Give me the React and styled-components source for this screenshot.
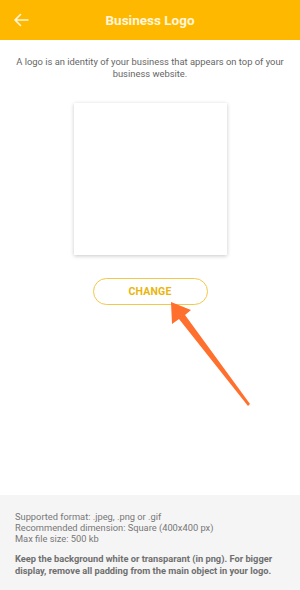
import React from "react";
import styled, { createGlobalStyle } from "styled-components";

const Global = createGlobalStyle`
  html, body { margin: 0; padding: 0; background: #fff; }
  body { font-family: Roboto, "Noto Sans", sans-serif; }
  * { box-sizing: border-box; }
`;

const Page = styled.div`
  position: relative;
  width: 300px;
  height: 590px;
  display: flex;
  flex-direction: column;
  overflow: hidden;
`;

const Header = styled.header`
  height: 40px;
  background: #ffb800;
  display: flex;
  align-items: center;
  justify-content: center;
  position: relative;
  flex-shrink: 0;
`;

const BackButton = styled.button`
  position: absolute;
  left: 12px;
  top: 11px;
  width: 18px;
  height: 18px;
  padding: 0;
  border: none;
  background: none;
  display: flex;
  align-items: center;
  justify-content: center;
`;

const Title = styled.h1`
  margin: 0;
  font-size: 13.5px;
  font-weight: 700;
  color: #fff6dc;
`;

const Main = styled.main`
  flex: 1;
  display: flex;
  flex-direction: column;
  align-items: center;
  padding-top: 16px;
`;

const Description = styled.p`
  margin: 0;
  padding: 0 10px;
  text-align: center;
  font-size: 9.4px;
  line-height: 12px;
  color: #666;
`;

const LogoBox = styled.div`
  margin-top: 23px;
  width: 153px;
  height: 152px;
  background: #fff;
  box-shadow: 0 1px 4px rgba(0, 0, 0, 0.22);
`;

const ChangeButton = styled.button`
  margin-top: 23px;
  width: 115px;
  height: 27px;
  border: 1px solid #f3c748;
  border-radius: 14px;
  background: #fff;
  color: #eab50f;
  font-family: Roboto, sans-serif;
  font-weight: 700;
  font-size: 10.5px;
  letter-spacing: 0.2px;
`;

const Footer = styled.footer`
  height: 95px;
  flex-shrink: 0;
  background: #f5f5f5;
  padding: 16px 15px 0;
  color: #777;
  font-size: 9.3px;
  line-height: 11px;
`;

const Line = styled.div``;

const Note = styled.p`
  margin: 9px 0 0;
  font-weight: 700;
  line-height: 12px;
  color: #6f6f6f;
`;

const Pointer = styled.svg`
  position: absolute;
  left: 0;
  top: 0;
  pointer-events: none;
`;

export default function App() {
  return (
    <>
      <Global />
      <Page>
        <Header>
          <BackButton aria-label="Back">
            <svg width="16" height="14" viewBox="0 0 16 14" fill="none">
              <path d="M15 7H2M7.5 1.5L2 7l5.5 5.5" stroke="#fff6dc" strokeWidth="1.6" strokeLinecap="round" strokeLinejoin="round" />
            </svg>
          </BackButton>
          <Title>Business Logo</Title>
        </Header>
        <Main>
          <Description>
            A logo is an identity of your business that appears on top of your business website.
          </Description>
          <LogoBox />
          <ChangeButton>CHANGE</ChangeButton>
        </Main>
        <Footer>
          <Line>Supported format: .jpeg, .png or .gif</Line>
          <Line>Recommended dimension: Square (400x400 px)</Line>
          <Line>Max file size: 500 kb</Line>
          <Note>
            Keep the background white or transparant (in png). For bigger display, remove all padding from the main object in your logo.
          </Note>
        </Footer>
        <Pointer width="300" height="590" viewBox="0 0 300 590">
          <polygon points="171,302 191,310 185,315 250,404 248,406 179,319 172,324" fill="#ff6f2d" />
        </Pointer>
      </Page>
    </>
  );
}
